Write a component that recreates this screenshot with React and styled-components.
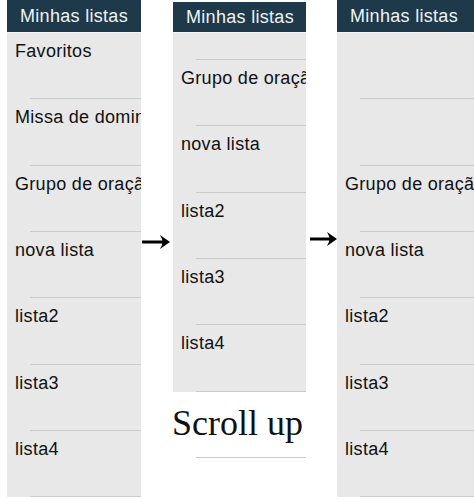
import styled, { createGlobalStyle } from 'styled-components';

const Global = createGlobalStyle`
  html, body {
    margin: 0;
    padding: 0;
    background: #ffffff;
  }
`;

const Page = styled.div`
  display: flex;
  align-items: flex-start;
  width: 474px;
  height: 501px;
  padding-left: 7px;
  box-sizing: border-box;
  overflow: hidden;
  background: #ffffff;
  font-family: 'Liberation Sans', Arial, sans-serif;
`;

const Panel = styled.div`
  display: flex;
  flex-direction: column;
  flex: none;
  width: ${(props) => props.$width}px;
  margin-top: ${(props) => props.$top || 0}px;
  overflow: hidden;
`;

const Header = styled.div`
  display: flex;
  align-items: center;
  height: ${(props) => props.$height}px;
  padding-left: 13px;
  background-color: #1e3a4a;
  color: #eef3f5;
  font-size: 18px;
  letter-spacing: 0.3px;
  white-space: nowrap;
  border-bottom: 1px solid #f4f4f4;
  box-sizing: border-box;
`;

const Row = styled.div`
  display: flex;
  flex-direction: column;
  background-color: ${(props) => (props.$blank ? '#ffffff' : '#e8e8e8')};
`;

const RowBody = styled.div`
  height: ${(props) => props.$height}px;
  padding: 8px 0 0 8px;
  box-sizing: border-box;
  font-size: 18px;
  letter-spacing: 0.3px;
  color: #111111;
  white-space: nowrap;
  overflow: hidden;
`;

const Separator = styled.div`
  height: 1px;
  margin-left: 23px;
  background-color: #cbcbcb;
`;

const NoteBody = styled.div`
  height: ${(props) => props.$height}px;
  overflow: hidden;
`;

const Note = styled.div`
  padding-top: 10px;
  margin-left: -1px;
  font-family: 'Liberation Serif', 'Times New Roman', serif;
  font-size: 36px;
  color: #111111;
  white-space: nowrap;
`;

const ArrowCol = styled.div`
  flex: none;
  width: ${(props) => props.$width}px;
  padding-top: ${(props) => props.$top}px;
  padding-left: ${(props) => props.$left}px;
  box-sizing: border-box;
  display: flex;
`;

const ROW_H = 65.33;

function Arrow({ width }) {
  const w = width;
  return (
    <svg width={w} height="16" viewBox={`0 0 ${w} 16`}>
      <line x1="0" y1="8" x2={w - 5} y2="8" stroke="#000" strokeWidth="3" />
      <path
        d={`M${w} 8 L${w - 10} 1 Q${w - 7.5} 5 ${w - 7.5} 8 Q${w - 7.5} 11 ${w - 10} 15 Z`}
        fill="#000"
      />
    </svg>
  );
}

function ListRow({ label, height = ROW_H }) {
  return (
    <Row>
      <RowBody $height={height}>{label}</RowBody>
      <Separator />
    </Row>
  );
}

const allLists = ['Favoritos', 'Missa de domingo', 'Grupo de oração', 'nova lista', 'lista2', 'lista3', 'lista4'];
const lower = allLists.slice(2);

function App() {
  return (
    <>
      <Global />
      <Page>
        <Panel $width={134}>
          <Header $height={33}>Minhas listas</Header>
          {allLists.map((name) => (
            <ListRow key={name} label={name} />
          ))}
        </Panel>

        <ArrowCol $width={32} $top={234} $left={1}>
          <Arrow width={28} />
        </ArrowCol>

        <Panel $width={133} $top={2}>
          <Header $height={31}>Minhas listas</Header>
          <ListRow label="" height={26} />
          {lower.map((name) => (
            <ListRow key={name} label={name} />
          ))}
          <Row $blank>
            <NoteBody $height={ROW_H}>
              <Note>Scroll up</Note>
            </NoteBody>
            <Separator />
          </Row>
        </Panel>

        <ArrowCol $width={31} $top={231} $left={4}>
          <Arrow width={27} />
        </ArrowCol>

        <Panel $width={137}>
          <Header $height={33}>Minhas listas</Header>
          <ListRow label="" />
          <ListRow label="" />
          {lower.map((name) => (
            <ListRow key={name} label={name} />
          ))}
        </Panel>
      </Page>
    </>
  );
}

export default App;
